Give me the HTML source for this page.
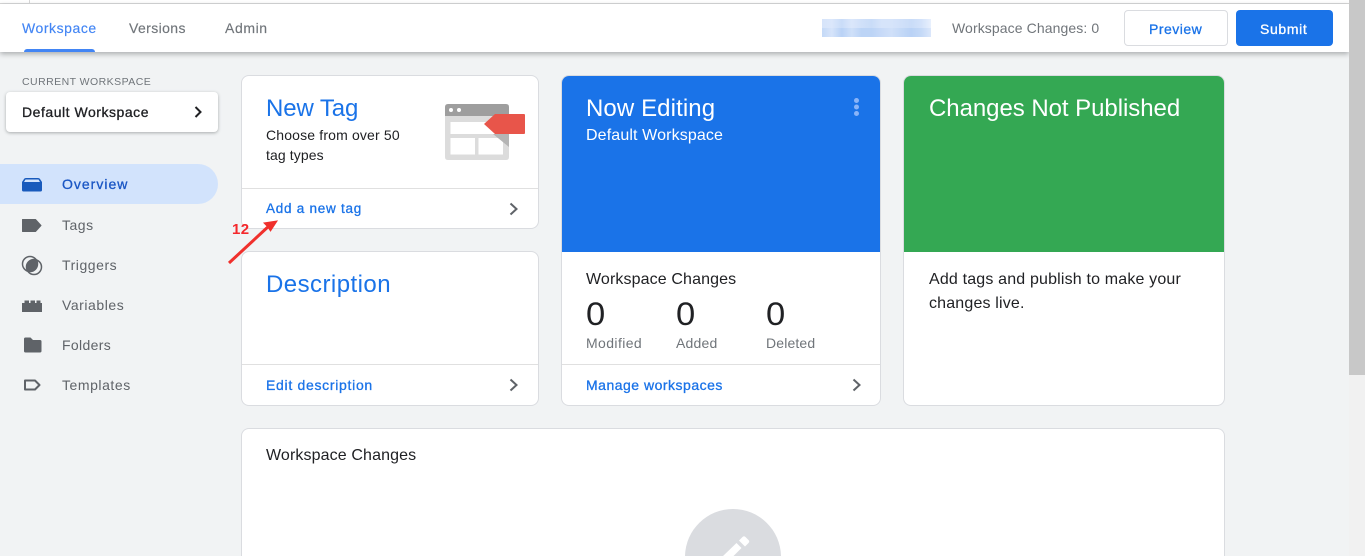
<!DOCTYPE html>
<html><head><meta charset="utf-8"><style>
html,body{margin:0;padding:0;width:1365px;height:556px;overflow:hidden}
body{background:#f1f3f4;font-family:"Liberation Sans",sans-serif;color:#202124}
#p{position:absolute;left:0;top:0;width:1365px;height:556px;overflow:hidden}
.a{position:absolute}
.t{position:absolute;white-space:nowrap;line-height:20px}
.card{position:absolute;background:#fff;border:1px solid #dadce0;border-radius:8px;box-sizing:border-box;overflow:hidden}
.nav{font-size:14px;color:#5f6368;left:62px}
.m{-webkit-text-stroke:.3px currentColor}
.link{font-size:14px;color:#1a73e8;-webkit-text-stroke:.3px currentColor}
.h{font-size:24px;line-height:30px}
svg{position:absolute;left:0;top:0;overflow:hidden}
</style></head><body><div id="p">
<div class="a" style="left:0;top:0;width:1349px;height:3px;background:#fff;border-bottom:1px solid #d8d8d8"></div>
<div class="a" style="left:29px;top:0;width:1px;height:3px;background:#d8d8d8"></div>
<div class="a" style="left:0;top:4px;width:1349px;height:48px;background:#fff;box-shadow:0 2px 5px rgba(60,64,67,.4)"></div>
<div class="a" style="left:1349px;top:0;width:16px;height:556px;background:#f1f1f1"></div>
<div class="a" style="left:1349px;top:0;width:16px;height:375px;background:#c8c8c8"></div>
<div class="t m" style="left:22px;top:18px;font-size:14px;color:#4285f4;letter-spacing:.55px;-webkit-text-stroke-width:.15px">Workspace</div>
<div class="a" style="left:24px;top:49px;width:71px;height:3px;background:#4285f4;border-radius:3px 3px 0 0"></div>
<div class="t m" style="left:129px;top:18px;font-size:14px;color:#70757a;letter-spacing:.4px;-webkit-text-stroke-width:.15px">Versions</div>
<div class="t m" style="left:225px;top:18px;font-size:14px;color:#70757a;letter-spacing:.6px;-webkit-text-stroke-width:.15px">Admin</div>
<div class="a" style="left:822px;top:19px;width:109px;height:9px;background:linear-gradient(90deg,#d6e4fa,#dbe7fb,#c9dcf8,#dbe7fb,#d0e0f9,#c9dcf8,#d6e4fa,#d6e4fa,#d0e0f9,#c9dcf8,#d3e2fa,#e8f0fd)"></div>
<div class="a" style="left:822px;top:28px;width:109px;height:9px;background:linear-gradient(90deg,#c4d9f7,#d6e4fa,#b9d2f6,#cfe0f9,#bcd4f6,#bcd4f6,#c7daf8,#d0e0f9,#c4d9f7,#b9d2f6,#c4d9f7,#dbe7fb)"></div>
<div class="t" style="left:952px;top:18px;font-size:14px;color:#70757a;letter-spacing:.1px">Workspace Changes: 0</div>
<div class="a" style="left:1124px;top:10px;width:104px;height:36px;box-sizing:border-box;border:1px solid #dadce0;border-radius:4px;background:#fff"></div>
<div class="t m" style="left:1149px;top:19px;font-size:14px;color:#1a73e8;letter-spacing:.5px">Preview</div>
<div class="a" style="left:1236px;top:10px;width:97px;height:36px;border-radius:4px;background:#1a73e8"></div>
<div class="t m" style="left:1260px;top:19px;font-size:14px;color:#fff;letter-spacing:.65px">Submit</div>

<div class="t" style="left:22px;top:72px;font-size:10.500px;letter-spacing:.45px;color:#70757a">CURRENT WORKSPACE</div>
<div class="a" style="left:6px;top:92px;width:212px;height:40px;background:#fff;border-radius:4px;box-shadow:0 1px 3px rgba(60,64,67,.4)"></div>
<div class="t m" style="left:22px;top:102px;font-size:14px;color:#202124;letter-spacing:.53px">Default Workspace</div>

<div class="a" style="left:0;top:164px;width:218px;height:40px;background:#d2e3fc;border-radius:0 20px 20px 0"></div>

<div class="card" style="left:241px;top:75px;width:298px;height:154px">
  <div class="a" style="left:0;top:112px;width:296px;height:1px;background:#e0e0e0"></div>
</div>
<div class="card" style="left:241px;top:251px;width:298px;height:155px">
  <div class="a" style="left:0;top:112px;width:296px;height:1px;background:#e0e0e0"></div>
</div>
<div class="card" style="left:561px;top:75px;width:320px;height:331px">
  <div class="a" style="left:0;top:0;width:318px;height:176px;background:#1a73e8"></div>
  <div class="a" style="left:0;top:288px;width:318px;height:1px;background:#e0e0e0"></div>
</div>
<div class="card" style="left:903px;top:75px;width:322px;height:331px">
  <div class="a" style="left:0;top:0;width:320px;height:176px;background:#34a853"></div>
</div>
<div class="card" style="left:241px;top:428px;width:984px;height:128px;border-bottom:none;border-radius:8px 8px 0 0"></div>

<svg width="1365" height="556">
<defs><clipPath id="c"><circle cx="30" cy="264" r="7.500"/></clipPath></defs>
<path d="M685.010 556A48 48 0 0 1 780.990 556z" fill="#dadce0"/>
<path d="M195.500 107l5 5-5 5" fill="none" stroke="#202124" stroke-width="2"/>
<path d="M22 182l2-3q.500-1 2-1h12q1.500 0 2 1l2 3v8q0 1.500-1.500 1.500h-17q-1.500 0-1.500-1.500z" fill="#185abc"/>
<path d="M24 182l1.500-2.500h13l1.500 2.500z" fill="#d2e3fc"/>
<path d="M22.500 219.500h13l5.500 6-5.500 6h-13z" fill="#5f6368" stroke="#5f6368" stroke-linejoin="round"/>
<circle cx="30" cy="264" r="7.500" fill="none" stroke="#5f6368" stroke-width="1.500"/>
<circle cx="34" cy="267" r="7.500" fill="none" stroke="#5f6368" stroke-width="1.500"/>
<circle cx="34" cy="267" r="7.500" fill="#5f6368" clip-path="url(#c)"/>
<path d="M22 312v-9h2.500v-2.500h4.500v2.500h1.500v-2.500h4.500v2.500h1.500v-2.500h4v2.500h1.500v9z" fill="#5f6368"/>
<path d="M24 339q0-1.500 1.500-1.500h5l2.500 2.500h7q1.500 0 1.500 1.500v9.500q0 1.500-1.500 1.500h-14.500q-1.500 0-1.500-1.500z" fill="#5f6368"/>
<path d="M25 380.500h10l4.500 4.500-4.500 4.500h-10z" fill="none" stroke="#5f6368" stroke-width="2" stroke-linejoin="round"/>
<path d="M445 116h64v41q0 3-3 3h-58q-3 0-3-3z" fill="#dcdcdc"/>
<path d="M445 116v-9q0-3 3-3h58q3 0 3 3v9z" fill="#9e9e9e"/>
<circle cx="451" cy="110" r="2" fill="#fff"/><circle cx="459" cy="110" r="2" fill="#fff"/>
<path d="M450.500 122h52v12h-52zM450.500 138h24.500v16.500h-24.500zM478.500 138h24.500v16.500h-24.500z" fill="#fff"/>
<path d="M493 134h16v13z" fill="#b5b5b5"/>
<path d="M495 114h29q1 0 1 1v18q0 1-1 1h-29l-11-10z" fill="#e8554a"/>
<path d="M510.500 203.500l6 5.500-6 5.500M510.500 379.500l6 5.500-6 5.500M853.500 379.500l6 5.500-6 5.500" fill="none" stroke="#5f6368" stroke-width="2"/>
<path d="M229 263l41-38" stroke="#f0302c" stroke-width="3" fill="none"/>
<path d="M277 221l-13 2 3.500 3.500 3 4.500z" fill="#f0302c" stroke="#f0302c"/>
<path d="M736.500 543l5 5-8 8h-10.500zM739 540.500l3.500-3.500q1.500-1.500 3 0l3 3q1.500 1.500 0 3l-3.500 3.500z" fill="#fff"/>
</svg>

<div class="t nav m" style="top:174px;color:#1a56c4;letter-spacing:1px">Overview</div>
<div class="t nav" style="top:215px;letter-spacing:.5px">Tags</div>
<div class="t nav" style="top:255px;letter-spacing:.55px">Triggers</div>
<div class="t nav" style="top:295px;letter-spacing:.55px">Variables</div>
<div class="t nav" style="top:335px;letter-spacing:.35px">Folders</div>
<div class="t nav" style="top:375px;letter-spacing:.55px">Templates</div>

<div class="t h" style="left:266px;top:94px;color:#1a73e8;letter-spacing:-.1px">New Tag</div>
<div class="t" style="left:266px;top:125px;font-size:14px;letter-spacing:.16px">Choose from over 50</div>
<div class="t" style="left:266px;top:145px;font-size:14px;letter-spacing:.1px">tag types</div>
<div class="t link" style="left:266px;top:199px;font-size:13.500px;letter-spacing:.75px">Add a new tag</div>
<div class="t" style="left:232px;top:220px;font-size:15px;font-weight:bold;color:#f4282c;letter-spacing:.4px">12</div>
<div class="t h" style="left:266px;top:270px;color:#1a73e8;letter-spacing:.45px">Description</div>
<div class="t link" style="left:266px;top:375px;font-size:14px;letter-spacing:.7px">Edit description</div>

<div class="t h" style="left:586px;top:94px;color:#fff;letter-spacing:.1px">Now Editing</div>
<div class="t" style="left:586px;top:126px;font-size:16px;color:#fff;letter-spacing:.13px">Default Workspace</div>
<div class="a" style="left:854px;top:98px;width:5px;height:5px;border-radius:50%;background:#8ab4f8;box-shadow:0 6.500px 0 #8ab4f8,0 13px 0 #8ab4f8"></div>
<div class="t" style="left:586px;top:270px;font-size:16px;letter-spacing:.12px">Workspace Changes</div>
<div class="t" style="left:586px;top:298px;font-size:32px;line-height:32px;color:#202124;transform:scaleX(1.08);transform-origin:left">0</div>
<div class="t" style="left:676px;top:298px;font-size:32px;line-height:32px;color:#202124;transform:scaleX(1.08);transform-origin:left">0</div>
<div class="t" style="left:766px;top:298px;font-size:32px;line-height:32px;color:#202124;transform:scaleX(1.08);transform-origin:left">0</div>
<div class="t" style="left:586px;top:333px;font-size:14px;color:#70757a;letter-spacing:.4px">Modified</div>
<div class="t" style="left:676px;top:333px;font-size:14px;color:#70757a;letter-spacing:.2px">Added</div>
<div class="t" style="left:766px;top:333px;font-size:14px;color:#70757a;letter-spacing:.15px">Deleted</div>
<div class="t link" style="left:586px;top:375px;font-size:14px;letter-spacing:.5px">Manage workspaces</div>

<div class="t h" style="left:929px;top:94px;color:#fff;letter-spacing:-.05px">Changes Not Published</div>
<div class="t" style="left:929px;top:268px;font-size:16px;line-height:24px;letter-spacing:.17px">Add tags and publish to make your<br>changes live.</div>
<div class="t" style="left:266px;top:446px;font-size:16px;letter-spacing:.12px">Workspace Changes</div>
</div></body></html>
